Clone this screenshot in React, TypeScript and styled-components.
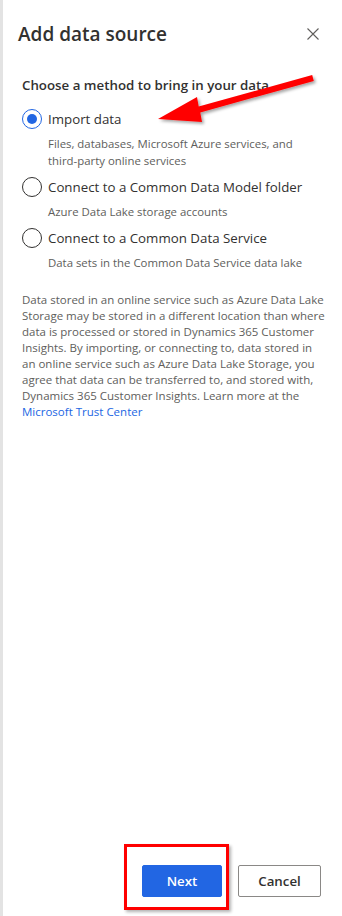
import styled, { createGlobalStyle } from "styled-components";

const GlobalStyle = createGlobalStyle`
  html, body {
    margin: 0;
    padding: 0;
    background: #ffffff;
  }
  body {
    font-family: "Open Sans", "Noto Sans", Arial, sans-serif;
    color: #323130;
  }
  * {
    box-sizing: border-box;
  }
`;

const Panel = styled.div`
  position: relative;
  width: 342px;
  height: 916px;
  display: flex;
  flex-direction: column;
  background: #ffffff;
  border-left: 3px solid #e3e3e3;
  overflow: hidden;
`;

const Header = styled.div`
  display: flex;
  align-items: center;
  justify-content: space-between;
  padding: 20px 22px 0 15px;
  height: 48px;
`;

const Title = styled.h2`
  margin: 0;
  font-size: 19px;
  line-height: 28px;
  font-weight: 600;
  color: #323130;
`;

const CloseButton = styled.button`
  border: none;
  background: none;
  padding: 0;
  width: 14px;
  height: 14px;
  display: flex;
  align-items: center;
  justify-content: center;
  cursor: pointer;
`;

const Body = styled.div`
  flex: 1 1 auto;
  padding: 27px 20px 0 19px;
`;

const Heading = styled.div`
  font-size: 13.3px;
  line-height: 20px;
  font-weight: 600;
  color: #323130;
  margin-bottom: 14px;
`;

const Options = styled.div`
  display: flex;
  flex-direction: column;
  gap: 8px;
`;

const Option = styled.label`
  display: flex;
  flex-direction: column;
  gap: 6px;
  cursor: pointer;
`;

const OptionRow = styled.div`
  display: flex;
  align-items: center;
  gap: 6px;
  height: 20px;
`;

const Radio = styled.span<{ $checked?: boolean }>`
  flex: 0 0 20px;
  width: 20px;
  height: 20px;
  border-radius: 50%;
  border: 1px solid ${(p) => (p.$checked ? "#2266e3" : "#323130")};
  display: flex;
  align-items: center;
  justify-content: center;

  &::after {
    content: "";
    width: 10px;
    height: 10px;
    border-radius: 50%;
    background: ${(p) => (p.$checked ? "#2266e3" : "transparent")};
  }
`;

const OptionLabel = styled.span`
  font-size: 13.3px;
  line-height: 20px;
  color: #323130;
`;

const OptionDescription = styled.div`
  padding-left: 26px;
  font-size: 11.4px;
  line-height: 17px;
  color: #605e5c;
`;

const Notice = styled.p`
  margin: 21px 0 0;
  font-size: 11.5px;
  line-height: 16px;
  color: #605e5c;
  white-space: nowrap;
`;

const TrustLink = styled.a`
  color: #2266e3;
  text-decoration: none;
`;

const Footer = styled.div`
  display: flex;
  justify-content: flex-end;
  gap: 16px;
  padding: 0 21px 19px 0;
`;

const Highlight = styled.div`
  position: relative;
  display: flex;
`;

const HighlightFrame = styled.div`
  position: absolute;
  left: -18px;
  top: -21px;
  right: -7px;
  bottom: -13px;
  border: 3px solid #ff0000;
  box-shadow: 2px 2px 3px rgba(0, 0, 0, 0.3);
  pointer-events: none;
`;

const Button = styled.button<{ $primary?: boolean }>`
  height: 32px;
  min-width: ${(p) => (p.$primary ? "80px" : "83px")};
  padding: 0 16px;
  border-radius: 2px;
  font-family: inherit;
  font-size: 13.3px;
  font-weight: 600;
  cursor: pointer;
  border: 1px solid ${(p) => (p.$primary ? "#2266e3" : "#8a8886")};
  background: ${(p) => (p.$primary ? "#2266e3" : "#ffffff")};
  color: ${(p) => (p.$primary ? "#ffffff" : "#323130")};
`;

const Arrow = styled.svg`
  position: absolute;
  left: -3px;
  top: 0;
  pointer-events: none;
`;

const options = [
  {
    label: "Import data",
    description: (
      <>
        Files, databases, Microsoft Azure services, and
        <br />
        third-party online services
      </>
    ),
    checked: true,
  },
  {
    label: "Connect to a Common Data Model folder",
    description: "Azure Data Lake storage accounts",
  },
  {
    label: "Connect to a Common Data Service",
    description: "Data sets in the Common Data Service data lake",
  },
];

export default function App() {
  return (
    <>
      <GlobalStyle />
      <Panel>
        <Header>
          <Title>Add data source</Title>
          <CloseButton aria-label="Close">
            <svg width="12" height="12" viewBox="0 0 12 12">
              <path d="M0.5 0.5 L11.5 11.5 M11.5 0.5 L0.5 11.5" stroke="#605e5c" strokeWidth="1.1" />
            </svg>
          </CloseButton>
        </Header>
        <Body>
          <Heading>Choose a method to bring in your data</Heading>
          <Options>
            {options.map((o) => (
              <Option key={o.label}>
                <OptionRow>
                  <Radio $checked={o.checked} />
                  <OptionLabel>{o.label}</OptionLabel>
                </OptionRow>
                <OptionDescription>{o.description}</OptionDescription>
              </Option>
            ))}
          </Options>
          <Notice>
            Data stored in an online service such as Azure Data Lake
            <br />
            Storage may be stored in a different location than where
            <br />
            data is processed or stored in Dynamics 365 Customer
            <br />
            Insights. By importing, or connecting to, data stored in
            <br />
            an online service such as Azure Data Lake Storage, you
            <br />
            agree that data can be transferred to, and stored with,
            <br />
            Dynamics 365 Customer Insights. Learn more at the
            <br />
            <TrustLink href="#">Microsoft Trust Center</TrustLink>
          </Notice>
        </Body>
        <Footer>
          <Highlight>
            <Button $primary>Next</Button>
            <HighlightFrame />
          </Highlight>
          <Button>Cancel</Button>
        </Footer>
        <Arrow width="342" height="140" viewBox="0 0 342 140">
          <defs>
            <filter id="arrowShadow" x="-10%" y="-30%" width="130%" height="180%">
              <feDropShadow dx="2" dy="2" stdDeviation="1.5" floodColor="#000" floodOpacity="0.35" />
            </filter>
          </defs>
          <polygon
            points="312.2,75.1 198.7,106.6 197,97 158,119 202,122 200.3,112.4 313.8,80.9"
            fill="#ff0000"
            filter="url(#arrowShadow)"
          />
        </Arrow>
      </Panel>
    </>
  );
}
